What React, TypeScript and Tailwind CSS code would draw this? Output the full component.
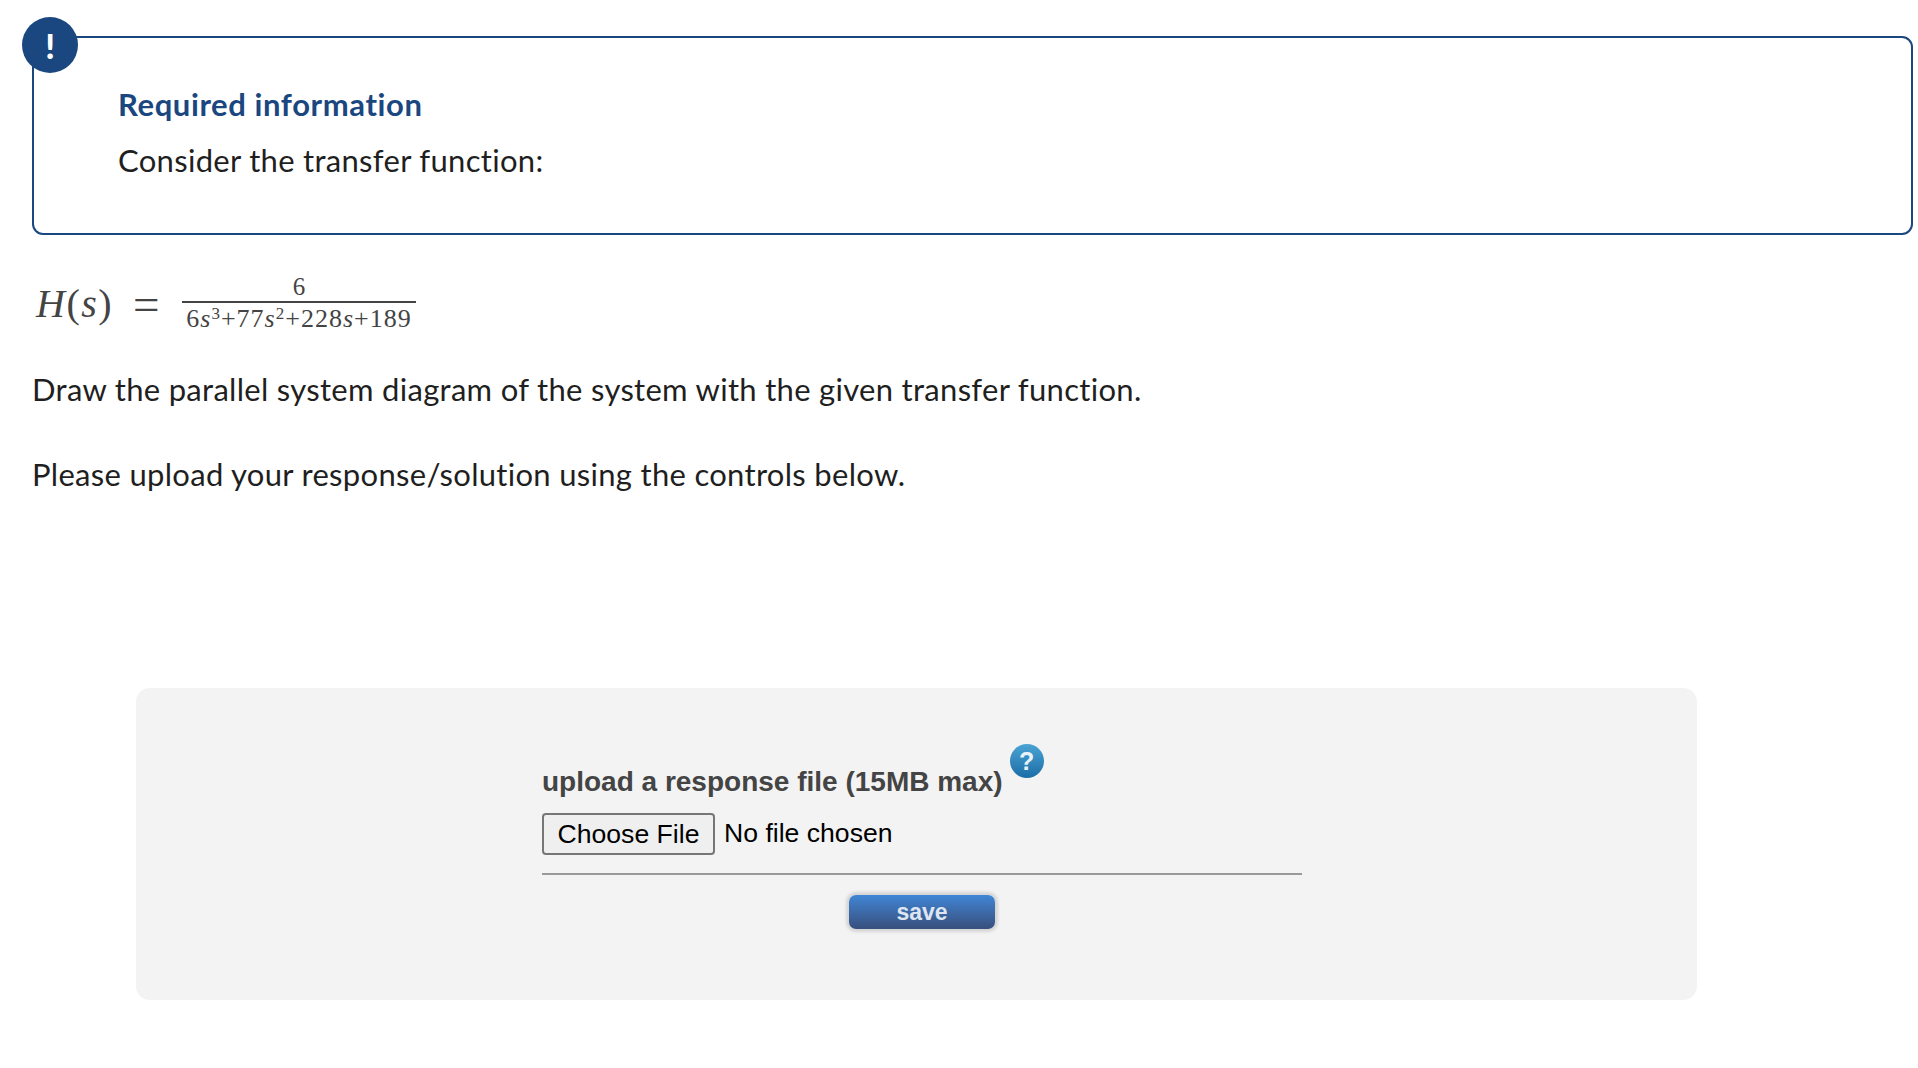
import React from 'react';

const body = "font-['Lato','Open_Sans',sans-serif] text-[31px] leading-[36px] tracking-[0.3px] text-[#1f1f1f]";

// Small help badge next to the upload label
const HelpBadge = () => (
  <span className="ml-[7px] mb-[20px] flex h-[34px] w-[34px] items-center justify-center rounded-full bg-gradient-to-b from-[#4aa3d4] to-[#1b6ea6] font-['Liberation_Sans',sans-serif] text-[25px] font-bold text-[#e8f2f8]">
    ?
  </span>
);

const Fraction = () => (
  <div className="flex h-[58px] items-center font-['Liberation_Serif',serif] text-[#444]">
    <span className="w-[87px] text-[40px] leading-none tracking-[1.5px]">
      <i>H</i>(<i>s</i>)
    </span>
    <span className="ml-[10px] w-[27px] text-[47px] leading-none">=</span>
    <div className="ml-[22px] flex w-[234px] flex-col items-center">
      <span className="text-[25px] leading-[28px]">6</span>
      <span className="h-[2px] w-full bg-[#444]" />
      <span className="whitespace-nowrap text-[26px] leading-[32px] tracking-[1px]">
        6<i>s</i><sup className="text-[17px]">3</sup>+77<i>s</i><sup className="text-[17px]">2</sup>+228<i>s</i>+189
      </span>
    </div>
  </div>
);

export default function App() {
  return (
    <div className="min-h-[1068px] bg-white pl-8 pr-[5px] pt-9">
      <div className="relative h-[199px] rounded-[11px] border-2 border-[#1a4780] pl-[84px] pt-[48px]">
        <div className="absolute -left-[12px] -top-[21px] flex h-[56px] w-[56px] items-center justify-center rounded-full bg-[#1a4780] font-['Lato',sans-serif] text-[34px] font-black text-white">
          !
        </div>
        <h2 className="font-['Lato',sans-serif] text-[31px] font-bold leading-[36px] tracking-[0.6px] text-[#1a4780]">Required information</h2>
        <p className={`mt-[20px] ${body}`}>Consider the transfer function:</p>
      </div>

      <div className="mt-[40px] pl-[4px]">
        <Fraction />
      </div>

      <p className={`mt-[38px] ${body}`}>Draw the parallel system diagram of the system with the given transfer function.</p>
      <p className={`mt-[49px] ${body}`}>Please upload your response/solution using the controls below.</p>

      <div className="ml-[104px] mt-[196px] h-[312px] w-[1561px] rounded-[14px] bg-[#f3f3f3] pl-[406px] pt-[70px]">
        <div className="flex h-[40px] items-end font-['Liberation_Sans',sans-serif] text-[28px] font-bold leading-[32px] text-[#444]">
          upload a response file (15MB max)
          <HelpBadge />
        </div>
        <div className="mt-[15px] flex h-[42px] w-[760px] items-center font-['Liberation_Sans',sans-serif] text-[26.6px] text-black">
          <button className="h-[42px] w-[173px] rounded-[4px] border-2 border-[#767676] bg-[#efefef]">Choose File</button>
          <span className="ml-[9px]">No file chosen</span>
        </div>
        <div className="mt-[18px] h-[2px] w-[760px] bg-[#999]" />
        <div className="mt-[20px] flex w-[760px] justify-center">
          <button className="h-[34px] w-[146px] rounded-[7px] bg-gradient-to-b from-[#3f86d6] to-[#374f7c] font-['Liberation_Sans',sans-serif] text-[23px] font-bold leading-none text-[#dde6f2] shadow-[0_0_3px_3px_#d5d5d5]">
            save
          </button>
        </div>
      </div>
    </div>
  );
}
